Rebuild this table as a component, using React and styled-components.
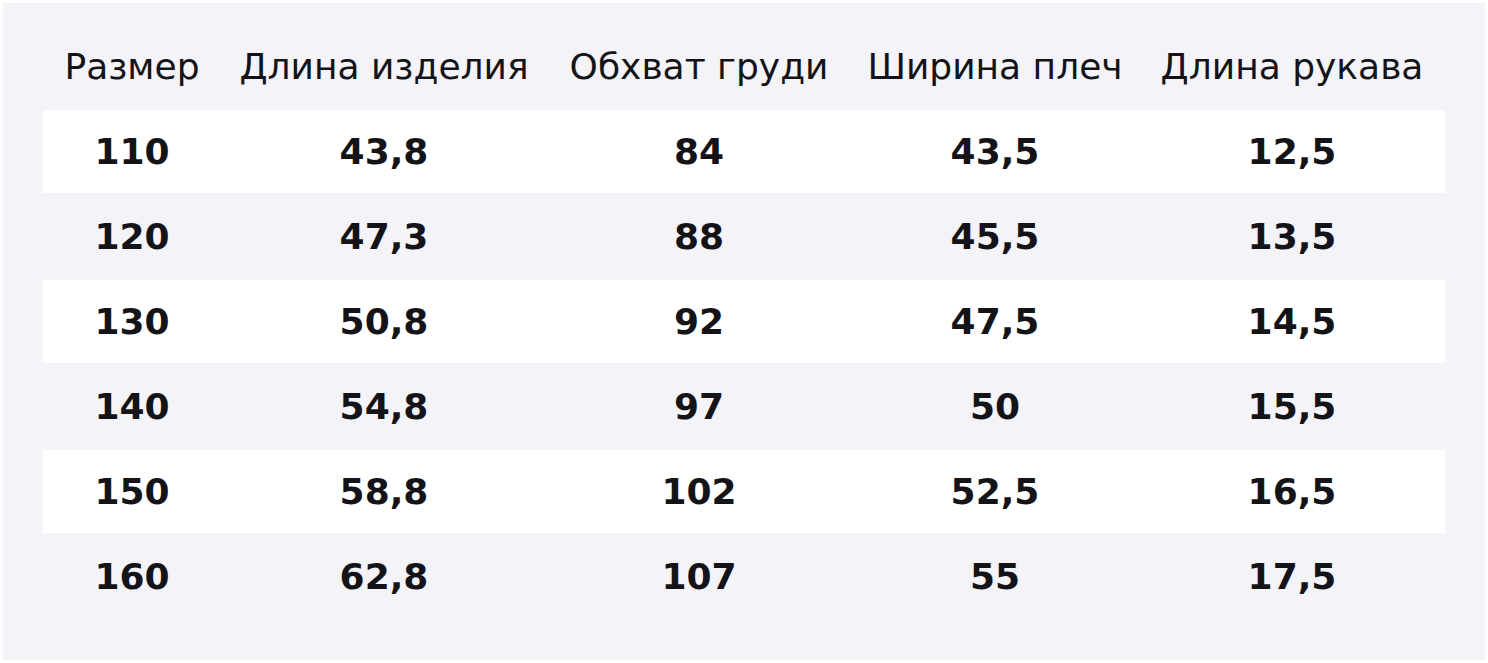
import React from "react";
import styled, { createGlobalStyle } from "styled-components";

const columns = [
    { title: "Размер", width: 178 },
    { title: "Длина изделия", width: 326 },
    { title: "Обхват груди", width: 304 },
    { title: "Ширина плеч", width: 288 },
    { title: "Длина рукава", width: 306 },
];

const rows = [
    ["110", "43,8", "84", "43,5", "12,5"],
    ["120", "47,3", "88", "45,5", "13,5"],
    ["130", "50,8", "92", "47,5", "14,5"],
    ["140", "54,8", "97", "50", "15,5"],
    ["150", "58,8", "102", "52,5", "16,5"],
    ["160", "62,8", "107", "55", "17,5"],
];

export default function App() {
    return (
        <>
            <GlobalStyle />
            <Panel>
                <Table>
                    <thead>
                        <tr>
                            {columns.map((col) => (
                                <HeadCell key={col.title} $width={col.width}>
                                    {col.title}
                                </HeadCell>
                            ))}
                        </tr>
                    </thead>
                    <tbody>
                        {rows.map((row, i) => (
                            <Row key={row[0]} $striped={i % 2 === 0}>
                                {row.map((value, j) => (
                                    <Cell key={j}>{value}</Cell>
                                ))}
                            </Row>
                        ))}
                    </tbody>
                </Table>
            </Panel>
        </>
    );
}

const GlobalStyle = createGlobalStyle`
    body {
        margin: 0;
        background: #ffffff;
        font-family: "DejaVu Sans", "Liberation Sans", sans-serif;
    }
    #root {
        padding: 3px;
    }
`;

const Panel = styled.div`
    background: #f3f3f8;
    padding: 40px;
    height: 657px;
    box-sizing: border-box;
`;

const Table = styled.table`
    width: 1402px;
    border-collapse: collapse;
    table-layout: fixed;
    color: #131318;
`;

const HeadCell = styled.th`
    width: ${({ $width }) => $width}px;
    height: 67px;
    padding: 3px 0 0;
    box-sizing: border-box;
    vertical-align: top;
    font-size: 36px;
    font-weight: normal;
    text-align: center;
    white-space: nowrap;
`;

const Row = styled.tr`
    height: ${({ $striped }) => ($striped ? 83 : 87)}px;
    background: ${({ $striped }) => ($striped ? "#ffffff" : "transparent")};
`;

const Cell = styled.td`
    padding: 0;
    text-align: center;
    vertical-align: middle;
    font-size: 36px;
    font-weight: bold;
`;
